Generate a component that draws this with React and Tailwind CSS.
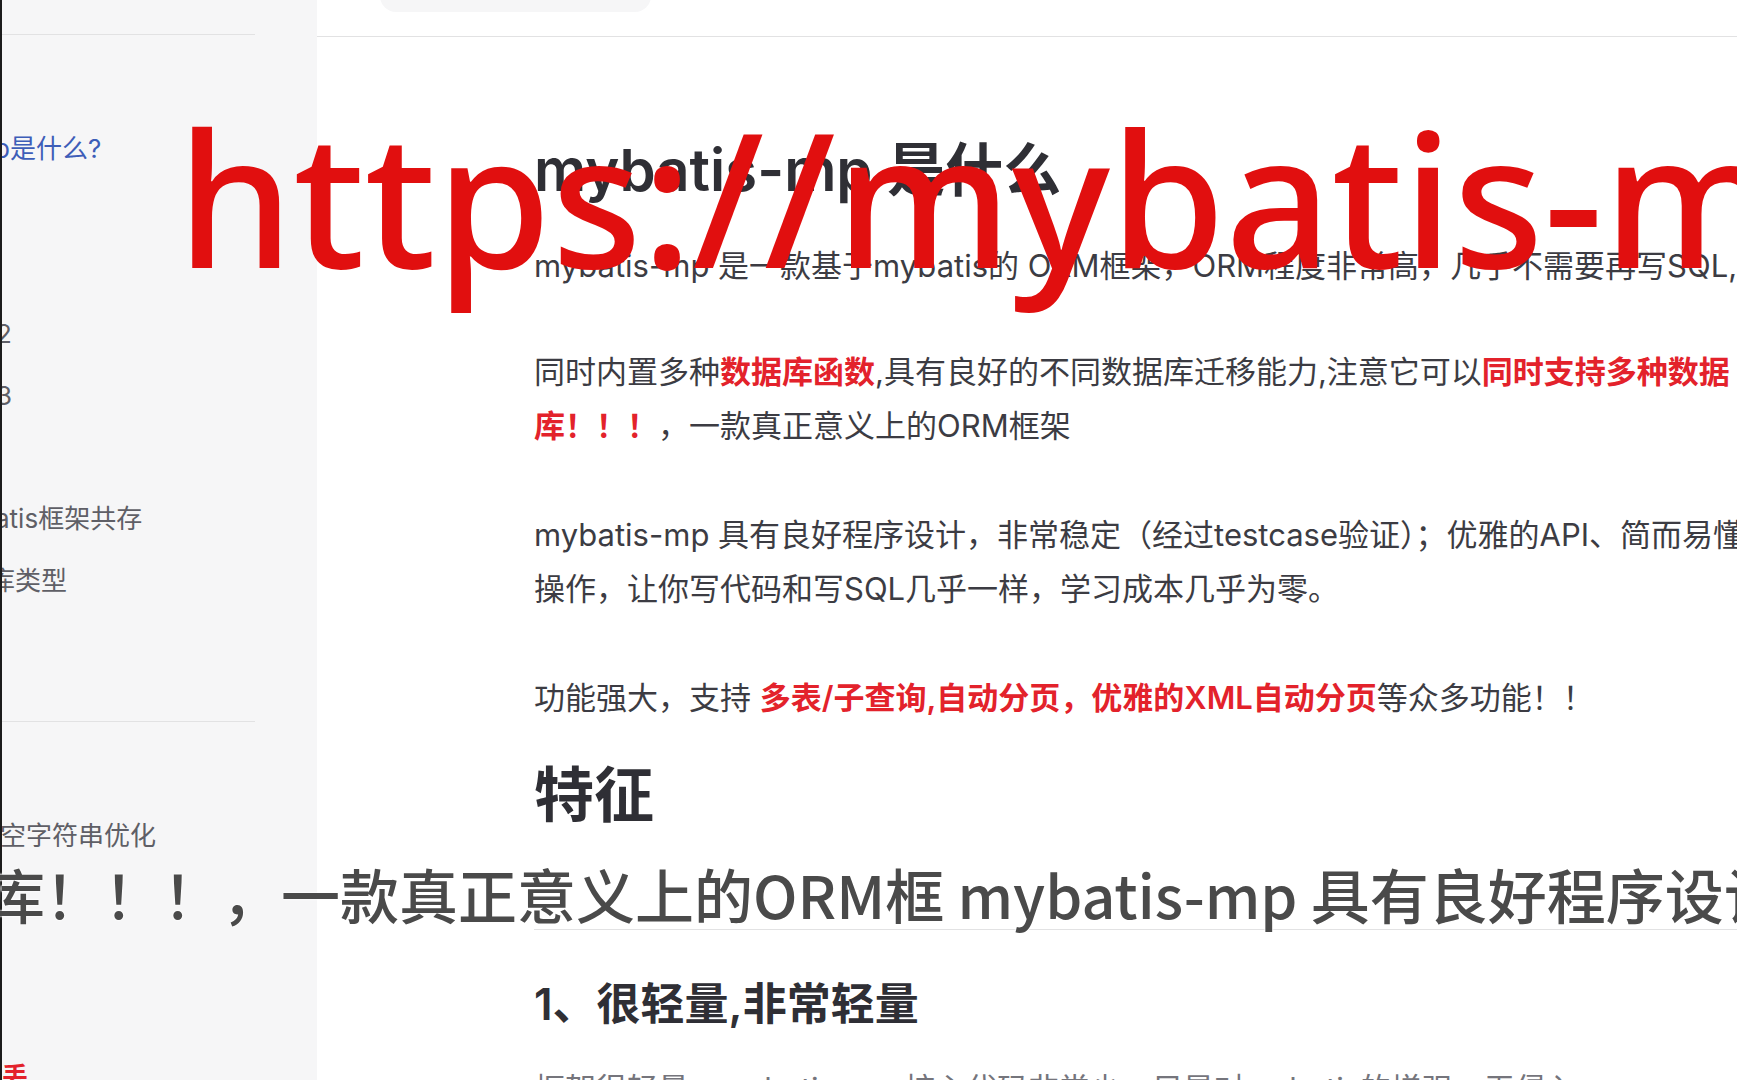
import React from 'react';

const body = { fontFamily: 'Inter, "Noto Sans CJK SC", sans-serif' };
const noto = { fontFamily: '"Noto Sans", "Noto Sans CJK SC", sans-serif' };

function Red({ children }) {
  return <span className="font-semibold text-[#e3222b]">{children}</span>;
}

function SideItem({ children, className = '' }) {
  return (
    <div className={`whitespace-nowrap text-[26px] leading-[36px] ${className}`}>{children}</div>
  );
}

export default function App() {
  return (
    <div className="relative flex w-[1737px] h-[1080px] overflow-hidden bg-white" style={body}>
      {/* Sidebar (scrolled, text clipped at the left) */}
      <aside className="w-[317px] shrink-0 h-full bg-[#f6f6f7] border-l-2 border-[#1c1c1c] overflow-hidden flex flex-col text-[#5f5f66]">
        <div className="h-[35px] w-[253px] border-b border-[#e2e2e3] shrink-0"></div>
        <SideItem className="mt-[96px] -ml-[8px] text-[#3d5db8]">p是什么?</SideItem>
        <SideItem className="mt-[149px] -ml-[6px]">2</SideItem>
        <SideItem className="mt-[26px] -ml-[6px]">3</SideItem>
        <SideItem className="mt-[87px] -ml-[7px]">atis框架共存</SideItem>
        <SideItem className="mt-[26px] -ml-[13px]">库类型</SideItem>
        <div className="mt-[122px] h-px w-[253px] bg-[#e2e2e3] shrink-0"></div>
        <SideItem className="mt-[96px] -ml-[2px]">空字符串优化</SideItem>
        <SideItem className="mt-[205px] font-bold text-[#e3222b]">丢</SideItem>
      </aside>

      {/* Main */}
      <main className="flex-1 min-w-0 flex flex-col">
        <header className="h-[37px] shrink-0 border-b border-[#e2e2e3] flex items-start">
          <div className="ml-[63px] -mt-[30px] w-[271px] h-[42px] rounded-2xl bg-[#f6f6f7]"></div>
        </header>

        <div className="pl-[217px] text-[#3c3c43] whitespace-nowrap">
          <h1 className="mt-[97px] text-[58px] leading-[72px] font-semibold text-[#2f2f35]">mybatis-mp 是什么</h1>

          <p className="mt-[33px] text-[31px] leading-[54px]">
            mybatis-mp 是一款基于mybatis的 ORM框架，ORM程度非常高，几乎不需要再写SQL,
          </p>

          <div className="mt-[52px] text-[31px] leading-[54px]">
            <p>
              同时内置多种<Red>数据库函数</Red>,具有良好的不同数据库迁移能力,注意它可以<Red>同时支持多种数据</Red>
            </p>
            <p>
              <Red>库！！！</Red>，一款真正意义上的ORM框架
            </p>
          </div>

          <div className="mt-[55px] text-[31px] leading-[54px]">
            <p>mybatis-mp 具有良好程序设计，非常稳定（经过testcase验证）；优雅的API、简而易懂的</p>
            <p>操作，让你写代码和写SQL几乎一样，学习成本几乎为零。</p>
          </div>

          <p className="mt-[55px] text-[31px] leading-[54px]">
            功能强大，支持 <Red>多表/子查询,自动分页，优雅的XML自动分页</Red>等众多功能！！
          </p>

          <h2 className="mt-[34px] text-[60px] leading-[72px] font-bold text-[#2f2f35] pb-[98px] border-b border-[#e2e2e3]">
            特征
          </h2>

          <h3 className="mt-[46px] text-[44px] leading-[56px] font-semibold text-[#2f2f35]">1、很轻量,非常轻量</h3>

          <p className="mt-[30px] text-[31px] leading-[54px] text-[#75757c]">
            框架很轻量，mybatis-mp 核心代码非常少，只是对mybatis的增强，无侵入
          </p>
        </div>
      </main>

      {/* Video overlays */}
      <div
        className="absolute left-[177px] top-[103px] text-[186px] leading-none font-medium text-[#e10f0f] whitespace-nowrap"
        style={noto}
      >
        https://mybatis-mp.cn
      </div>
      <div
        className="absolute left-[-14px] top-[864px] text-[59px] leading-none font-medium text-[#4a4a4a] whitespace-nowrap [text-shadow:0_0_2px_#fff,0_0_2px_#fff,0_0_3px_#fff]"
        style={{ fontFamily: '"Noto Sans CJK SC", sans-serif' }}
      >
        库！！！，一款真正意义上的ORM框 mybatis-mp 具有良好程序设计
      </div>
    </div>
  );
}
